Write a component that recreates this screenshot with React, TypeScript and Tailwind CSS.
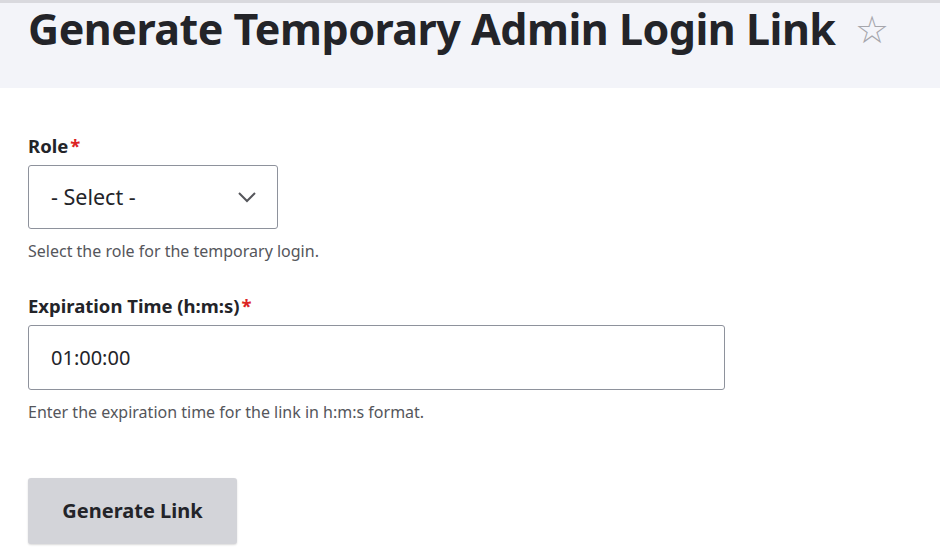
import React from 'react'

const App: React.FC = () => {
  return (
    <div className="w-[940px] h-[560px] bg-white overflow-hidden" style={{ fontFamily: '"Noto Sans", "Open Sans", sans-serif' }}>
      <div className="h-[88px] bg-[#f3f4f9] border-t-[3px] border-[#d9d9de] flex items-start pl-[28px]">
        <h1 className="text-[43px] leading-[52px] font-bold text-[#232429] tracking-[-0.5px]">
          Generate Temporary Admin Login Link
        </h1>
        <span className="ml-[19px] mt-[1px] text-[38px] leading-[48px] text-[#a6a6ac]">☆</span>
      </div>

      <div className="pl-[28px] pt-[47px]">
        <div className="mb-[8px] text-[18.5px] leading-[22px] font-bold text-[#232429]">
          Role<span className="text-[#dc2323] ml-[2px]">*</span>
        </div>
        <div className="w-[250px] h-[64px] border border-[#8e929c] rounded-[3px] flex items-center justify-between pl-[22px] pr-[20px] text-[21.5px] text-[#232429]">
          <span>- Select -</span>
          <svg width="20" height="12" viewBox="0 0 20 12" fill="none" stroke="#55565b" strokeWidth="2">
            <path d="M2 2l8 8 8-8" />
          </svg>
        </div>
        <div className="mt-[12px] text-[16px] leading-[20px] text-[#55565b]">
          Select the role for the temporary login.
        </div>

        <div className="mt-[34px] mb-[8px] text-[18.5px] leading-[22px] font-bold text-[#232429]">
          Expiration Time (h:m:s)<span className="text-[#dc2323] ml-[2px]">*</span>
        </div>
        <div className="w-[697px] h-[65px] border border-[#8e929c] rounded-[3px] flex items-center pl-[22px] text-[20px] text-[#232429]">
          01:00:00
        </div>
        <div className="mt-[12px] text-[16px] leading-[20px] text-[#55565b]">
          Enter the expiration time for the link in h:m:s format.
        </div>

        <button className="mt-[56px] w-[209px] h-[66px] bg-[#d3d4d9] rounded-[3px] text-[20px] font-bold text-[#232429] shadow-[0_1px_2px_rgba(0,0,0,0.15)]">
          Generate Link
        </button>
      </div>
    </div>
  )
}

export default App
